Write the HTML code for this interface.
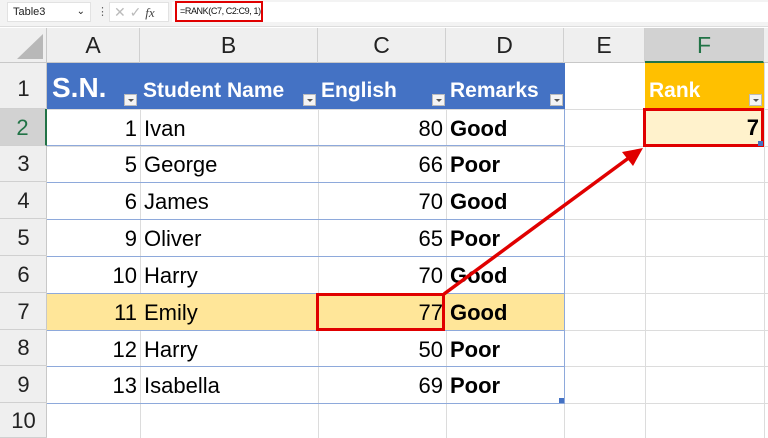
<!DOCTYPE html>
<html><head><style>
*{margin:0;padding:0;box-sizing:border-box}
body{width:768px;height:438px;overflow:hidden;background:#fff;font-family:"Liberation Sans",sans-serif;position:relative}
.a{position:absolute}
.t{position:absolute;font-size:22px;line-height:37px;white-space:nowrap;color:#000}
.h{position:absolute;font-size:22px;line-height:46px;font-weight:bold;color:#fff;white-space:nowrap}
.dd{position:absolute;width:13px;height:12px;background:#f4f4f4;border:1px solid #bbb}
.dd:after{content:"";position:absolute;left:3px;top:4px;border-left:3px solid transparent;border-right:3px solid transparent;border-top:3px solid #555}
.ch{position:absolute;top:28px;height:35px;font-size:23px;line-height:35px;text-align:center;color:#222;border-right:1px solid #d0d0d0}
.rh{position:absolute;left:0;width:47px;font-size:22px;text-align:center;color:#222;border-bottom:1px solid #d0d0d0}
</style></head><body>
<!-- formula bar -->
<div class="a" style="left:0;top:0;width:768px;height:27px;background:#f3f3f3;border-bottom:1px solid #ddd"></div>
<div class="a" style="left:7px;top:2px;width:84px;height:20px;background:#fff;border:1px solid #e2e2e2;font-size:11px;line-height:18px;padding-left:5px;color:#222">Table3<span style="position:absolute;right:5px;top:0;font-size:10px">&#8964;</span></div>
<div class="a" style="left:97px;top:5px;font-size:11px;color:#666">&#8942;</div>
<div class="a" style="left:109px;top:2px;width:60px;height:20px;background:#fff;border:1px solid #e2e2e2;font-size:14px;line-height:18px;color:#bbb;padding-left:4px">✕ ✓ <i style="font-family:'Liberation Serif',serif;color:#444;font-size:13px">fx</i></div>
<div class="a" style="left:172px;top:2px;width:596px;height:20px;background:#fff"></div>
<div class="a" style="left:175px;top:1px;width:88px;height:21px;border:2px solid #e00000;font-size:9px;letter-spacing:-0.4px;line-height:17px;padding-left:3px;color:#111;white-space:nowrap;overflow:hidden">=RANK(C7, C2:C9, 1)</div>
<!-- column headers -->
<div class="a" style="left:0;top:28px;width:768px;height:35px;background:#efefef;border-bottom:1px solid #c8c8c8"></div>
<div class="a" style="left:0;top:28px;width:47px;height:35px;border-right:1px solid #c8c8c8"></div>
<div class="a" style="left:17px;top:34px;width:0;height:0;border-left:26px solid transparent;border-bottom:25px solid #b8b8b8"></div>
<div class="ch" style="left:47px;width:93px">A</div>
<div class="ch" style="left:140px;width:178px">B</div>
<div class="ch" style="left:318px;width:128px">C</div>
<div class="ch" style="left:446px;width:118px">D</div>
<div class="ch" style="left:564px;width:81px">E</div>
<div class="ch" style="left:645px;width:119px;background:#d2d2d2;color:#217346;border-bottom:2px solid #217346">F</div>
<!-- row headers -->
<div class="a" style="left:0;top:63px;width:47px;height:375px;background:#efefef;border-right:1px solid #c8c8c8"></div>
<div class="rh" style="top:63px;height:46px;line-height:52px">1</div>
<div class="rh" style="top:109px;height:37px;line-height:37px;background:#d2d2d2;color:#217346;border-right:2px solid #217346">2</div>
<div class="rh" style="top:146px;height:36px;line-height:36px">3</div>
<div class="rh" style="top:182px;height:37px;line-height:37px">4</div>
<div class="rh" style="top:219px;height:37px;line-height:37px">5</div>
<div class="rh" style="top:256px;height:37px;line-height:37px">6</div>
<div class="rh" style="top:293px;height:37px;line-height:37px">7</div>
<div class="rh" style="top:330px;height:36px;line-height:36px">8</div>
<div class="rh" style="top:366px;height:37px;line-height:37px">9</div>
<div class="rh" style="top:403px;height:35px;line-height:35px">10</div>
<!-- grid lines -->
<svg class="a" style="left:47px;top:63px" width="721" height="375">
<g stroke="#dcdcdc" stroke-width="1">
<line x1="93.5" y1="0" x2="93.5" y2="375"/><line x1="271.5" y1="0" x2="271.5" y2="375"/>
<line x1="399.5" y1="0" x2="399.5" y2="375"/><line x1="517.5" y1="0" x2="517.5" y2="375"/>
<line x1="598.5" y1="0" x2="598.5" y2="375"/><line x1="717.5" y1="0" x2="717.5" y2="375"/>
<line x1="0" y1="46.5" x2="721" y2="46.5"/><line x1="0" y1="83.5" x2="721" y2="83.5"/>
<line x1="0" y1="119.5" x2="721" y2="119.5"/><line x1="0" y1="156.5" x2="721" y2="156.5"/>
<line x1="0" y1="193.5" x2="721" y2="193.5"/><line x1="0" y1="230.5" x2="721" y2="230.5"/>
<line x1="0" y1="267.5" x2="721" y2="267.5"/><line x1="0" y1="303.5" x2="721" y2="303.5"/>
<line x1="0" y1="340.5" x2="721" y2="340.5"/>
</g></svg>
<!-- table header -->
<div class="a" style="left:47px;top:63px;width:518px;height:46px;background:#4472c4"></div>
<div class="a" style="left:645px;top:63px;width:119px;height:46px;background:#ffc000"></div>
<!-- highlighted row 7 -->
<div class="a" style="left:47px;top:293px;width:518px;height:37px;background:#ffe699"></div>
<!-- table borders -->
<svg class="a" style="left:47px;top:109px" width="520" height="300">
<g stroke="#8ea9db" stroke-width="1">
<line x1="0" y1="36.5" x2="518" y2="36.5"/><line x1="0" y1="73.5" x2="518" y2="73.5"/>
<line x1="0" y1="110.5" x2="518" y2="110.5"/><line x1="0" y1="147.5" x2="518" y2="147.5"/>
<line x1="0" y1="184.5" x2="518" y2="184.5"/><line x1="0" y1="221.5" x2="518" y2="221.5"/>
<line x1="0" y1="257.5" x2="518" y2="257.5"/><line x1="0" y1="294.5" x2="518" y2="294.5"/>
<line x1="517.5" y1="0" x2="517.5" y2="295"/></g>
<rect x="512" y="289" width="5" height="5" fill="#4472c4"/>
</svg>
<div class="h" style="left:52px;top:65px;font-size:28px">S.N.</div>
<div class="h" style="left:143px;top:68px;font-size:21px">Student Name</div>
<div class="h" style="left:321px;top:68px;font-size:21px">English</div>
<div class="h" style="left:450px;top:68px;font-size:21px">Remarks</div>
<div class="h" style="left:649px;top:68px;font-size:21px">Rank</div>
<div class="dd" style="left:124px;top:94px"></div>
<div class="dd" style="left:303px;top:94px"></div>
<div class="dd" style="left:432px;top:94px"></div>
<div class="dd" style="left:550px;top:94px"></div>
<div class="dd" style="left:749px;top:94px"></div>
<!-- data -->
<div class="t" style="left:47px;width:90px;text-align:right;top:110px">1</div>
<div class="t" style="left:47px;width:90px;text-align:right;top:146px">5</div>
<div class="t" style="left:47px;width:90px;text-align:right;top:183px">6</div>
<div class="t" style="left:47px;width:90px;text-align:right;top:220px">9</div>
<div class="t" style="left:47px;width:90px;text-align:right;top:257px">10</div>
<div class="t" style="left:47px;width:90px;text-align:right;top:294px">11</div>
<div class="t" style="left:47px;width:90px;text-align:right;top:331px">12</div>
<div class="t" style="left:47px;width:90px;text-align:right;top:367px">13</div>
<div class="t" style="left:144px;top:110px">Ivan</div>
<div class="t" style="left:144px;top:146px">George</div>
<div class="t" style="left:144px;top:183px">James</div>
<div class="t" style="left:144px;top:220px">Oliver</div>
<div class="t" style="left:144px;top:257px">Harry</div>
<div class="t" style="left:144px;top:294px">Emily</div>
<div class="t" style="left:144px;top:331px">Harry</div>
<div class="t" style="left:144px;top:367px">Isabella</div>
<div class="t" style="left:318px;width:125px;text-align:right;top:110px">80</div>
<div class="t" style="left:318px;width:125px;text-align:right;top:146px">66</div>
<div class="t" style="left:318px;width:125px;text-align:right;top:183px">70</div>
<div class="t" style="left:318px;width:125px;text-align:right;top:220px">65</div>
<div class="t" style="left:318px;width:125px;text-align:right;top:257px">70</div>
<div class="t" style="left:318px;width:125px;text-align:right;top:294px">77</div>
<div class="t" style="left:318px;width:125px;text-align:right;top:331px">50</div>
<div class="t" style="left:318px;width:125px;text-align:right;top:367px">69</div>
<div class="t" style="left:450px;top:110px;font-weight:bold">Good</div>
<div class="t" style="left:450px;top:146px;font-weight:bold">Poor</div>
<div class="t" style="left:450px;top:183px;font-weight:bold">Good</div>
<div class="t" style="left:450px;top:220px;font-weight:bold">Poor</div>
<div class="t" style="left:450px;top:257px;font-weight:bold">Good</div>
<div class="t" style="left:450px;top:294px;font-weight:bold">Good</div>
<div class="t" style="left:450px;top:331px;font-weight:bold">Poor</div>
<div class="t" style="left:450px;top:367px;font-weight:bold">Poor</div>
<!-- rank cell -->
<div class="a" style="left:643px;top:108px;width:121px;height:39px;background:#fff2cc;border:3px solid #e00000"></div>
<div class="t" style="left:645px;width:114px;text-align:right;top:109px;font-weight:bold">7</div>
<div class="a" style="left:758px;top:141px;width:5px;height:5px;background:#4472c4"></div>
<!-- C7 box -->
<div class="a" style="left:316px;top:293px;width:129px;height:38px;border:3px solid #e00000"></div>
<!-- arrow -->
<svg class="a" style="left:0;top:0" width="768" height="438">
<line x1="444" y1="294" x2="630" y2="157" stroke="#e00000" stroke-width="3.5"/>
<polygon points="643,148 622,152 633,166" fill="#e00000"/>
</svg>
</body></html>
